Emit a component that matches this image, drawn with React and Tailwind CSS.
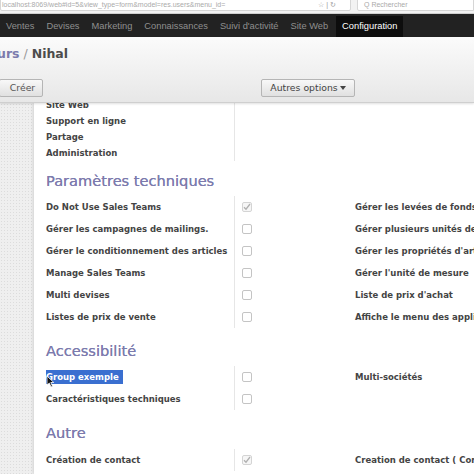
const menus = ['Ventes', 'Devises', 'Marketing', 'Connaissances', "Suivi d'activité", 'Site Web']

function Box({ checked }) {
  return (
    <div className={`w-[10px] h-[10px] rounded-[2px] border flex items-center justify-center ${checked ? 'border-[#d4d4d4] bg-[#f6f6f6]' : 'border-[#c4c4c4] bg-white'}`}>
      {checked && (
        <svg width="8" height="8" viewBox="0 0 8 8"><path d="M1 4.2 L3 6.2 L7 1" fill="none" stroke="#b0b0b0" strokeWidth="1.3" /></svg>
      )}
    </div>
  )
}

function Row({ label, right, checked, tall = true, hasBox = true, selected }) {
  return (
    <div className={`grid grid-cols-[189px_120px_1fr] ${tall ? 'h-[22px]' : 'h-[16px]'} items-stretch`}>
      <div className="border-r border-[#e6e6e6] flex items-center whitespace-nowrap text-[8.5px] font-bold text-[#444]">
        {selected ? <span className="bg-[#3a6fd0] text-white pr-[4px] py-[1px]">{label}</span> : label}
      </div>
      <div className="pl-[7px] flex items-center">{hasBox && <Box checked={checked} />}</div>
      <div className="flex items-center whitespace-nowrap text-[8.5px] font-bold text-[#444]">{right}</div>
    </div>
  )
}

function Heading({ children, className }) {
  return <div className={`text-[14.6px] text-[#7c7bad] leading-[20px] [text-shadow:0_0_0.5px_#7c7bad] ${className}`}>{children}</div>
}

export default function App() {
  return (
    <div className="w-[474px] h-[474px] overflow-hidden bg-[#ededed] font-['DejaVu_Sans',sans-serif] flex flex-col">
      <div className="h-[14px] bg-[#f2f2f2] border-b border-[#d0d0d0] flex items-center gap-[6px] shrink-0">
        <div className="w-[351px] h-[12px] -mt-[3px] bg-white border border-[#d6d6d6] rounded-b-[2px] flex items-center pl-[1px] text-[7px] text-[#aaa] whitespace-nowrap overflow-hidden font-['Liberation_Sans',sans-serif]">
          <span>localhost:8069/web#id=5&amp;view_type=form&amp;model=res.users&amp;menu_id=</span>
          <span className="ml-auto pr-[14px] text-[#999]">☆ | ↻</span>
        </div>
        <div className="flex-1 h-[12px] -mt-[3px] bg-white border border-[#d6d6d6] rounded-bl-[2px] text-[7px] text-[#aaa] pl-[6px] flex items-center font-['Liberation_Sans',sans-serif]">Q Rechercher</div>
      </div>
      <nav className="h-[23px] bg-[#222222] flex items-end shrink-0 font-['Liberation_Sans',sans-serif] text-[9.3px]">
        {menus.map(m => (
          <div key={m} className="h-[21px] px-[6px] flex items-center text-[#8f8f8f] whitespace-nowrap">{m}</div>
        ))}
        <div className="h-[21px] px-[6px] ml-[2px] flex items-center text-white bg-[#0d0d0d] whitespace-nowrap">Configuration</div>
      </nav>
      <header className="h-[66px] shrink-0 bg-gradient-to-b from-[#fbfbfb] to-[#e7e7e7] border-b border-[#cfcfcf] relative z-10 shadow-[0_1px_2px_rgba(0,0,0,0.12)]">
        <div className="pt-[8px] text-[12.5px] font-bold whitespace-nowrap leading-[18px] -ml-[3px]">
          <span className="text-[#7c7bad]">urs</span>
          <span className="text-[#999] font-normal"> / </span>
          <span className="text-[#4c4c4c]">Nihal</span>
        </div>
        <div className="flex items-center mt-[16px] h-[18px]">
          <button className="w-[44px] h-[18px] -ml-[1px] border border-[#b5b5b5] rounded-[2px] bg-gradient-to-b from-[#f8f8f8] to-[#e0e0e0] text-[9.3px] text-[#555] pl-[3px]">Créer</button>
          <button className="ml-[218px] h-[18px] w-[94px] border border-[#b5b5b5] rounded-[2px] bg-gradient-to-b from-[#f8f8f8] to-[#e0e0e0] text-[9.3px] text-[#444] flex items-center justify-center gap-[2px]">
            Autres options
            <svg width="6" height="4" viewBox="0 0 6 4"><path d="M0 0 H6 L3 4 Z" fill="#444" /></svg>
          </button>
        </div>
      </header>
      <div className="flex flex-1 min-h-0">
        <div className="w-[34px] shrink-0 bg-[radial-gradient(#dcdcdc_0.6px,transparent_0.7px)] bg-[length:3px_3px] bg-[#efefef]" />
        <div className="flex-1 bg-white overflow-hidden shadow-[-1px_0_3px_rgba(0,0,0,0.12)] pl-[12px] relative">
          <div className="-mt-[6px]">
            <Row tall={false} hasBox={false} label="Site Web" />
            <Row tall={false} hasBox={false} label="Support en ligne" />
            <Row tall={false} hasBox={false} label="Partage" />
            <Row tall={false} hasBox={false} label="Administration" />
            <Heading className="mt-[10px] mb-[5px]">Paramètres techniques</Heading>
            <Row label="Do Not Use Sales Teams" checked right="Gérer les levées de fonds" />
            <Row label="Gérer les campagnes de mailings." right="Gérer plusieurs unités de mesure" />
            <Row label="Gérer le conditionnement des articles" right="Gérer les propriétés d'articles" />
            <Row label="Manage Sales Teams" right="Gérer l'unité de mesure" />
            <Row label="Multi devises" right="Liste de prix d'achat" />
            <Row label="Listes de prix de vente" right="Affiche le menu des applications" />
            <Heading className="mt-[13px] mb-[5px]">Accessibilité</Heading>
            <Row label="Group exemple" selected right="Multi-sociétés" />
            <Row label="Caractéristiques techniques" />
            <Heading className="mt-[13px] mb-[6px]">Autre</Heading>
            <Row label="Création de contact" checked right="Creation de contact ( Common )" />
          </div>
          <svg className="absolute left-[12px] top-[272px]" width="9" height="13" viewBox="0 0 9 13">
            <path d="M1 1 L1 10 L3.3 8 L5 12 L6.5 11.3 L4.8 7.5 L7.8 7.5 Z" fill="#111" stroke="#fff" strokeWidth="0.8" />
          </svg>
        </div>
      </div>
    </div>
  )
}
